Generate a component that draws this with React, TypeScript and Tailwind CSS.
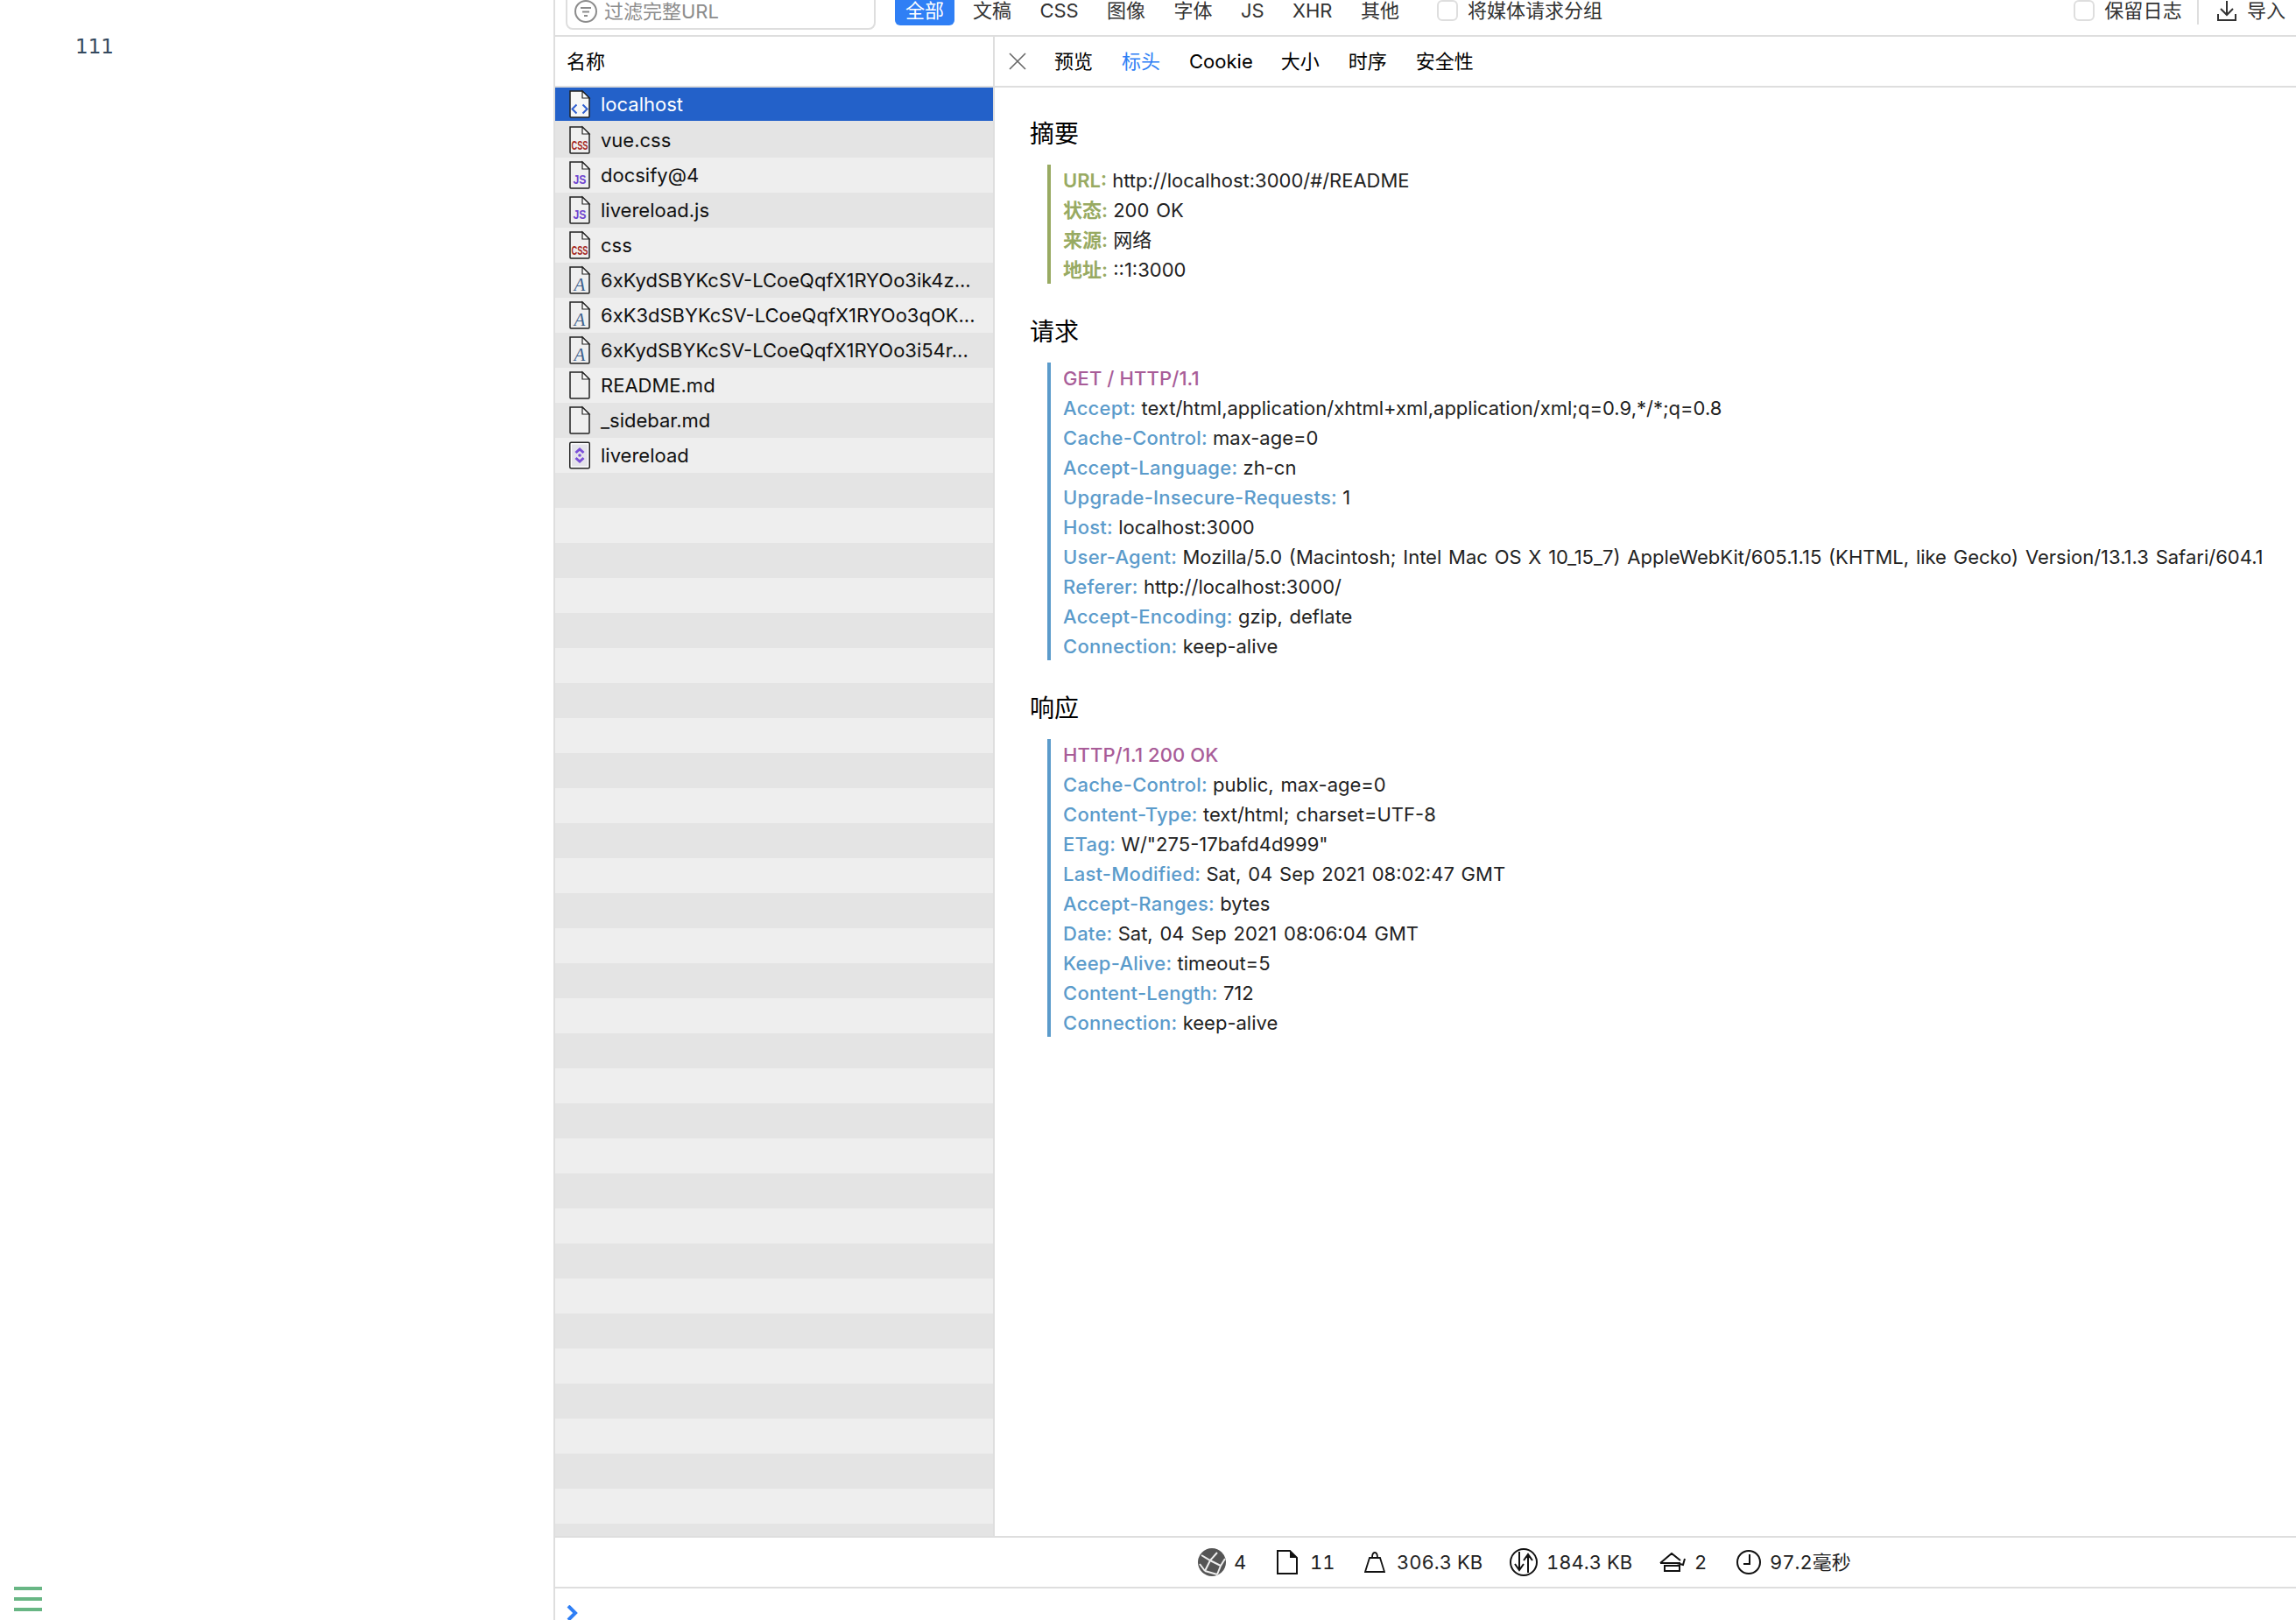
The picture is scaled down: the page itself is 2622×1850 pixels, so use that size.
const sans = "font-['Inter','Noto_Sans_CJK_SC',sans-serif]";

type IconKind = 'html' | 'css' | 'js' | 'font' | 'blank' | 'socket';

const files: { name: string; icon: IconKind }[] = [
  { name: 'localhost', icon: 'html' },
  { name: 'vue.css', icon: 'css' },
  { name: 'docsify@4', icon: 'js' },
  { name: 'livereload.js', icon: 'js' },
  { name: 'css', icon: 'css' },
  { name: '6xKydSBYKcSV-LCoeQqfX1RYOo3ik4z...', icon: 'font' },
  { name: '6xK3dSBYKcSV-LCoeQqfX1RYOo3qOK...', icon: 'font' },
  { name: '6xKydSBYKcSV-LCoeQqfX1RYOo3i54r...', icon: 'font' },
  { name: 'README.md', icon: 'blank' },
  { name: '_sidebar.md', icon: 'blank' },
  { name: 'livereload', icon: 'socket' },
];

const stripes = Array.from({ length: 31 }, (_, i) => i + files.length);

const summary = [
  ['URL:', 'http://localhost:3000/#/README'],
  ['状态:', '200 OK'],
  ['来源:', '网络'],
  ['地址:', '::1:3000'],
];

const request = [
  ['Accept:', 'text/html,application/xhtml+xml,application/xml;q=0.9,*/*;q=0.8'],
  ['Cache-Control:', 'max-age=0'],
  ['Accept-Language:', 'zh-cn'],
  ['Upgrade-Insecure-Requests:', '1'],
  ['Host:', 'localhost:3000'],
  ['User-Agent:', 'Mozilla/5.0 (Macintosh; Intel Mac OS X 10_15_7) AppleWebKit/605.1.15 (KHTML, like Gecko) Version/13.1.3 Safari/604.1'],
  ['Referer:', 'http://localhost:3000/'],
  ['Accept-Encoding:', 'gzip, deflate'],
  ['Connection:', 'keep-alive'],
];

const response = [
  ['Cache-Control:', 'public, max-age=0'],
  ['Content-Type:', 'text/html; charset=UTF-8'],
  ['ETag:', 'W/"275-17bafd4d999"'],
  ['Last-Modified:', 'Sat, 04 Sep 2021 08:02:47 GMT'],
  ['Accept-Ranges:', 'bytes'],
  ['Date:', 'Sat, 04 Sep 2021 08:06:04 GMT'],
  ['Keep-Alive:', 'timeout=5'],
  ['Content-Length:', '712'],
  ['Connection:', 'keep-alive'],
];

const FileIcon = ({ kind }: { kind: IconKind }) => {
  if (kind === 'socket') {
    return (
      <svg width="24" height="32" viewBox="0 0 24 32" className="shrink-0">
        <rect x="0.75" y="1.25" width="22.5" height="29.5" rx="1.5" fill="#ffffff" stroke="#222" strokeWidth="1.5" />
        <rect x="3" y="3.5" width="18" height="25" fill="#e4e3ea" />
        <path d="M7.5 13 L12 9 L16.5 13 M7.5 19 L12 23 L16.5 19" fill="none" stroke="#7a4fd8" strokeWidth="3" />
        <circle cx="12" cy="16" r="1.8" fill="#7a4fd8" />
      </svg>
    );
  }
  return (
    <svg width="24" height="32" viewBox="0 0 24 32" className="shrink-0 overflow-visible">
      <path d="M1 1 H15 L23 9 V30 Q23 31 22 31 H2 Q1 31 1 30 Z" fill={kind === 'html' ? '#f7f7f7' : '#efefef'} stroke="#222" strokeWidth="1.5" />
      <path d="M15 1 V9 H23 Z" fill="#fff" stroke="#222" strokeWidth="1.2" />
      {kind === 'html' && <path d="M8.5 16.5 L3.5 21.5 L8.5 26.5 M15.5 16.5 L20.5 21.5 L15.5 26.5" fill="none" stroke="#2f5fd0" strokeWidth="2" />}
      {kind === 'css' && <text x="2.5" y="27" fontSize="15" fontWeight="bold" fontFamily="'Liberation Sans',sans-serif" fill="#a5281e" textLength="19" lengthAdjust="spacingAndGlyphs">CSS</text>}
      {kind === 'js' && <text x="4.5" y="26" fontSize="15" fontWeight="bold" fontFamily="'Liberation Sans',sans-serif" fill="#6f47d0" textLength="15" lengthAdjust="spacingAndGlyphs">JS</text>}
      {kind === 'font' && <text x="12" y="28" textAnchor="middle" fontSize="21" fontStyle="italic" fontFamily="'Liberation Serif',serif" fill="#3d5f8c">A</text>}
    </svg>
  );
};

const Block = ({ color, labelColor, first, rows }: { color: string; labelColor: string; first?: string; rows: string[][] }) => (
  <div className={`ml-[20px] border-l-4 pl-[14px] leading-[36px] ${color}`}>
    {first && <div className="h-[34px] whitespace-nowrap font-[550] tracking-[0.1px] text-[#a85c98]">{first}</div>}
    {rows.map(([k, v]) => (
      <div key={k} className="h-[34px] whitespace-nowrap">
        <span className={labelColor}>{k}</span>{' '}
        <span className="[word-spacing:1.6px]">{v}</span>
      </div>
    ))}
  </div>
);

const StatusBar = () => (
  <div className="h-[60px] box-border border-y-2 border-[#dedede] flex items-center pl-[734px] text-[22px] tabular-nums text-[#222] shrink-0">
    <div className="w-[90px] flex items-center">
      <svg width="32" height="32" viewBox="0 0 32 32" className="shrink-0">
        <circle cx="16" cy="16" r="16" fill="#555" />
        <path d="M4 8 L14 14 L22 5 M14 14 L8 26 M14 14 L26 20 L22 30 M26 20 L31 12 M8 26 L22 30 M2 18 L8 26" fill="none" stroke="#eee" strokeWidth="2" />
      </svg>
      <span className="ml-[9px]">4</span>
    </div>
    <div className="w-[100px] flex items-center">
      <svg width="24" height="28" viewBox="0 0 24 28" className="shrink-0">
        <path d="M1 1 H15 L23 9 V27 H1 Z" fill="none" stroke="#111" strokeWidth="2" />
        <path d="M15 1 V9 H23 Z" fill="#111" />
      </svg>
      <span className="ml-[14px]">11</span>
    </div>
    <div className="w-[166px] flex items-center">
      <svg width="24" height="24" viewBox="0 0 24 24" className="shrink-0">
        <path d="M6 7 H18 L23 23 H1 Z M9 7 Q9 1 12 1 Q15 1 15 7" fill="none" stroke="#111" strokeWidth="1.8" />
      </svg>
      <span className="ml-[13px]">306.3 KB</span>
    </div>
    <div className="w-[171px] flex items-center">
      <svg width="32" height="32" viewBox="0 0 32 32" className="shrink-0">
        <circle cx="16" cy="16" r="15" fill="none" stroke="#111" strokeWidth="2" />
        <path d="M11 4 V24 M6 18 L11 25 L16 18 M21 28 V8 M16 14 L21 7 L26 14" fill="none" stroke="#111" strokeWidth="2" />
      </svg>
      <span className="ml-[10px]">184.3 KB</span>
    </div>
    <div className="w-[88px] flex items-center">
      <svg width="30" height="22" viewBox="0 0 30 22" className="shrink-0">
        <path d="M1 12 L14 1 L24 9 M29 7 L27 14 L20 12 M1 12 H24 M6 15 H23 V21 H6 Z" fill="none" stroke="#111" strokeWidth="2" />
      </svg>
      <span className="ml-[10px]">2</span>
    </div>
    <div className="flex items-center">
      <svg width="28" height="28" viewBox="0 0 28 28" className="shrink-0">
        <circle cx="14" cy="14" r="13" fill="none" stroke="#111" strokeWidth="2" />
        <path d="M15 5 V16 H8" fill="none" stroke="#111" strokeWidth="2" />
      </svg>
      <span className="ml-[10px]">97.2毫秒</span>
    </div>
  </div>
);

const App = () => {
  return (
    <div className={`w-[2622px] h-[1850px] flex overflow-hidden bg-white text-[22px] leading-[34px] ${sans}`}>
      <aside className="w-[632px] shrink-0 flex flex-col justify-between pl-[16px] pb-[10px]">
        <div className="pl-[70px] pt-[37px] text-[23px] leading-[32px] text-[#34495e] font-['DejaVu_Sans',sans-serif]">111</div>
        <div className="w-[32px] flex flex-col gap-[8px]">
          <div className="h-[4px] bg-[#68b684]" />
          <div className="h-[4px] bg-[#68b684]" />
          <div className="h-[4px] bg-[#68b684]" />
        </div>
      </aside>

      <main className="flex-1 min-w-0 flex flex-col border-l-2 border-[#dedede]">
        {/* filter toolbar, cut off by the top of the window */}
        <div className="h-[42px] box-border border-b-2 border-[#dedede] flex items-start pl-[12px] pr-[12px] text-[#333] leading-[24px] shrink-0 overflow-hidden">
          <div className="w-[354px] h-[43px] -mt-[9px] box-border border-2 border-[#dedede] rounded-[8px] flex items-center pl-[8px] text-[#8c8c8c]">
            <svg width="26" height="26" viewBox="0 0 26 26" className="shrink-0">
              <circle cx="13" cy="13" r="12" fill="none" stroke="#8c8c8c" strokeWidth="2" />
              <path d="M7 9 H19 M9 13.5 H17 M11 18 H15" stroke="#8c8c8c" strokeWidth="2" />
            </svg>
            <span className="ml-[8px]">过滤完整URL</span>
          </div>
          <div className="ml-[22px] w-[68px] h-[35px] -mt-[6px] rounded-[6px] bg-[#2f7ff5] text-white flex items-center justify-center">全部</div>
          <div className="ml-[21px] flex gap-[32.4px]">
            <span>文稿</span>
            <span>CSS</span>
            <span>图像</span>
            <span>字体</span>
            <span>JS</span>
            <span>XHR</span>
            <span>其他</span>
          </div>
          <div className="ml-[43px] w-[24px] h-[24px] box-border border-2 border-[#dedede] rounded-[6px]" />
          <span className="ml-[11px]">将媒体请求分组</span>
          <div className="ml-auto w-[24px] h-[24px] box-border border-2 border-[#dedede] rounded-[6px]" />
          <span className="ml-[11px] tracking-[0.2px]">保留日志</span>
          <div className="ml-[17px] w-[2px] h-[28px] bg-[#dedede]" />
          <svg width="22" height="24" viewBox="0 0 22 24" className="ml-[21px] shrink-0">
            <path d="M11 1 V17 M4 10 L11 17 L18 10 M1 16 V23 H21 V16" fill="none" stroke="#333" strokeWidth="2" />
          </svg>
          <span className="ml-[12px]">导入</span>
        </div>

        <div className="flex-1 min-h-0 flex">
          {/* file list */}
          <div className="w-[502px] shrink-0 flex flex-col border-r-2 border-[#dedede]">
            <div className="h-[58px] box-border border-b-2 border-[#dedede] flex items-center pl-[13px] text-black shrink-0">名称</div>
            <div className="flex-1 min-h-0 overflow-hidden">
              {files.map((f, i) => (
                <div
                  key={f.name}
                  className={`h-[40px] flex items-center pl-[16px] whitespace-nowrap text-[#111] ${i === 0 ? 'bg-[#2361c9] text-white border-b-2 border-[#e4e4e4]' : i % 2 === 1 ? 'bg-[#e4e4e4]' : 'bg-[#eeeeee]'}`}
                >
                  <FileIcon kind={f.icon} />
                  <span className="ml-[12px]">{f.name}</span>
                </div>
              ))}
              {stripes.map((i) => (
                <div key={i} className={`h-[40px] ${i % 2 === 1 ? 'bg-[#e4e4e4]' : 'bg-[#eeeeee]'}`} />
              ))}
            </div>
          </div>

          {/* detail panel */}
          <div className="flex-1 min-w-0 flex flex-col">
            <div className="h-[58px] box-border border-b-2 border-[#dedede] flex items-center pl-[16px] text-black shrink-0">
              <svg width="20" height="20" viewBox="0 0 20 20" className="shrink-0">
                <path d="M1 1 L19 19 M19 1 L1 19" stroke="#666" strokeWidth="1.6" />
              </svg>
              <span className="ml-[32px]">预览</span>
              <span className="ml-[33px] text-[#2f7ff5]">标头</span>
              <span className="ml-[33px]">Cookie</span>
              <span className="ml-[32px]">大小</span>
              <span className="ml-[33px]">时序</span>
              <span className="ml-[33px]">安全性</span>
            </div>
            <div className="pl-[40px] pt-[36px] text-[#222]">
              <h2 className="h-[32px] leading-[35px] text-[28px] text-black mb-[20px] font-normal">摘要</h2>
              <Block color="border-[#98aa62]" labelColor="font-semibold text-[#98aa62]" rows={summary} />
              <h2 className="h-[32px] leading-[35px] text-[28px] text-black mt-[38px] mb-[20px] font-normal">请求</h2>
              <Block color="border-[#5b9bcb]" labelColor="font-[550] tracking-[0.25px] text-[#5b9bcb]" first="GET / HTTP/1.1" rows={request} />
              <h2 className="h-[32px] leading-[35px] text-[28px] text-black mt-[38px] mb-[20px] font-normal">响应</h2>
              <Block color="border-[#5b9bcb]" labelColor="font-[550] tracking-[0.25px] text-[#5b9bcb]" first="HTTP/1.1 200 OK" rows={response} />
            </div>
          </div>
        </div>

        <StatusBar />

        {/* console prompt */}
        <div className="h-[36px] shrink-0 pl-[12px] pt-[19px] overflow-hidden">
          <svg width="16" height="18" viewBox="0 0 16 18">
            <path d="M3 1 L11 9 L3 17" fill="none" stroke="#2f7ff5" strokeWidth="4" />
          </svg>
        </div>
      </main>
    </div>
  );
};

export default App;
